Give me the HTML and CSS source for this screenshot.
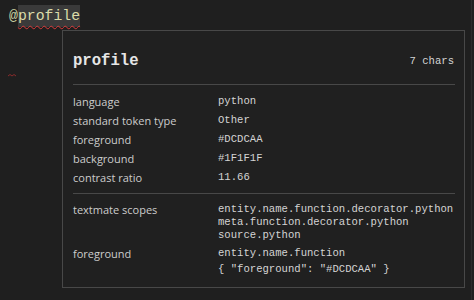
FILE: index.html
```html
<!DOCTYPE html>
<html>
<head>
  <title>Inspect Editor Tokens</title>
  <link rel="stylesheet" href="styles.css">
</head>
<body>
  <div class="editor">
    <div class="code-line"><span class="deco">@</span><span class="fn">profile</span></div>
    <div class="hint">
      <svg width="8" height="3" viewBox="0 0 8 3"><polyline points="0,2 2,0.5 4,2 6,0.5 8,2" fill="none" stroke="#8a2c2c" stroke-width="1"/></svg>
    </div>

    <!-- hover widget -->
    <div class="hover">
      <div class="hover-head">
        <span class="hover-title">profile</span>
        <span class="hover-count">7 chars</span>
      </div>
      <div class="sep"></div>
      <div class="props first">
        <div class="prop-label">language</div>
        <div class="prop-value">python</div>
        <div class="prop-label">standard token type</div>
        <div class="prop-value">Other</div>
        <div class="prop-label">foreground</div>
        <div class="prop-value">#DCDCAA</div>
        <div class="prop-label">background</div>
        <div class="prop-value">#1F1F1F</div>
        <div class="prop-label">contrast ratio</div>
        <div class="prop-value">11.66</div>
      </div>
      <div class="sep"></div>
      <div class="props scopes">
        <div class="prop-label">textmate scopes</div>
        <div class="prop-value">entity.name.function.decorator.python<br>meta.function.decorator.python<br>source.python</div>
        <div class="prop-label">foreground</div>
        <div class="prop-value">entity.name.function<div class="rule">{ "foreground": "#DCDCAA" }</div></div>
      </div>
    </div>
  </div>
</body>
</html>
```

FILE: styles.css
```css
body {
  margin: 0;
  background-color: #1f1f1f;
}

.editor {
  position: relative;
  width: 471px;
  height: 300px;
  border-right: 1px solid #2b2b2b;
  font-family: "Liberation Mono", monospace;
}

.code-line {
  padding: 5px 0 0 9px;
  height: 22px;
  line-height: 22px;
  font-size: 14.8px;
  color: #dcdcaa;
}

.code-line .deco {
  color: #c8d0a0;
}

.code-line .fn {
  display: inline-block;
  height: 22px;
  background-color: #3a3a3a;
  text-decoration: underline wavy #d83a3a;
  text-decoration-thickness: 1px;
  text-underline-offset: 5px;
}

.hint {
  margin: 46px 0 0 8px;
  height: 3px;
  line-height: 0;
}

.hover {
  position: absolute;
  left: 62px;
  top: 30px;
  width: 403px;
  height: 258px;
  box-sizing: border-box;
  padding: 0 9px 0 10px;
  background-color: #202020;
  border: 1px solid #484848;
  color: #d4d4d4;
}

.hover-head {
  display: flex;
  justify-content: space-between;
  align-items: center;
  height: 46px;
  padding-top: 7px;
}

.hover-title {
  font-size: 15.6px;
  font-weight: bold;
  color: #e6e6e6;
}

.hover-count {
  font-size: 10.6px;
  padding-right: 1px;
}

.sep {
  height: 1px;
  background-color: #484848;
}

.props {
  display: grid;
  grid-template-columns: 145px 1fr;
}

.props.first {
  margin: 7px 0 6px;
  grid-auto-rows: 19px;
  line-height: 19px;
}

.props.scopes {
  margin-top: 9px;
  row-gap: 5px;
  line-height: 13px;
}

.prop-label {
  font-family: "Open Sans", sans-serif;
  font-size: 11px;
  color: #cccccc;
}

.prop-value {
  font-size: 10.6px;
}

.rule {
  margin-top: 3px;
}
```
